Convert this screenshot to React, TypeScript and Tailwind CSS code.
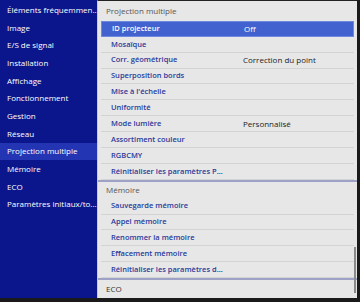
const leftItems = [
  "Éléments fréquemmen...",
  "Image",
  "E/S de signal",
  "Installation",
  "Affichage",
  "Fonctionnement",
  "Gestion",
  "Réseau",
  "Projection multiple",
  "Mémoire",
  "ECO",
  "Paramètres initiaux/to...",
];

const projection: [string, string?][] = [
  ["ID projecteur", "Off"],
  ["Mosaïque"],
  ["Corr. géométrique", "Correction du point"],
  ["Superposition bords"],
  ["Mise à l'échelle"],
  ["Uniformité"],
  ["Mode lumière", "Personnalisé"],
  ["Assortiment couleur"],
  ["RGBCMY"],
  ["Réinitialiser les paramètres P..."],
];

const memoire = [
  "Sauvegarde mémoire",
  "Appel mémoire",
  "Renommer la mémoire",
  "Effacement mémoire",
  "Réinitialiser les paramètres d...",
];

function Row({ label, value, active }: { label: string; value?: string; active?: boolean }) {
  return (
    <div className="h-4 px-[3px]">
      <div
        className={
          active
            ? "flex h-full items-center bg-[#4262cf] border border-[#6f88e0] text-white"
            : "flex h-full items-center border-b border-[#d3d3d3] text-[#2a3a9a]"
        }
      >
        <span className="w-[142px] pl-[10px] text-[7.5px] leading-normal font-semibold whitespace-nowrap">
          {label}
        </span>
        {value && (
          <span className={"text-[8px] leading-normal " + (active ? "text-white" : "text-[#222]")}>
            {value}
          </span>
        )}
      </div>
    </div>
  );
}

function SectionHeader({ title, className }: { title: string; className: string }) {
  return (
    <div className={"flex items-center pl-[8px] text-[8px] leading-normal " + className}>{title}</div>
  );
}

export default function App() {
  return (
    <div
      className="w-[360px] h-[302px] bg-[#1a1a1a] flex overflow-hidden"
      style={{ fontFamily: '"Open Sans", "Noto Sans", sans-serif' }}
    >
      {/* left menu */}
      <div className="w-[97px] h-[298px] bg-[#0b168c] pt-[1px] flex flex-col">
        {leftItems.map((item) => (
          <div
            key={item}
            className={
              "h-[17.7px] flex items-center pl-[7px] text-white text-[8px] leading-normal whitespace-nowrap " +
              (item === "Projection multiple" ? "bg-[#2335b3]" : "")
            }
          >
            {item}
          </div>
        ))}
      </div>

      {/* right panel */}
      <div className="relative w-[260px] h-[298px] bg-[#e7e7e7] border-l border-[#c8c8d8] border-t border-t-[#222] flex flex-col">
        <SectionHeader title="Projection multiple" className="h-[20px] text-[#555]" />
        {projection.map(([label, value], i) => (
          <Row key={label} label={label} value={value} active={i === 0} />
        ))}
        <div className="h-[2px] bg-[#9da2c6]" />
        <SectionHeader title="Mémoire" className="h-[17px] text-[#555]" />
        {memoire.map((label) => (
          <Row key={label} label={label} />
        ))}
        <div className="h-[2px] bg-[#9da2c6]" />
        <SectionHeader title="ECO" className="h-[18px] text-[#333]" />
        <div className="absolute right-[1px] top-[246px] w-[2px] h-[46px] bg-[#8a8a8a]" />
      </div>
    </div>
  );
}
